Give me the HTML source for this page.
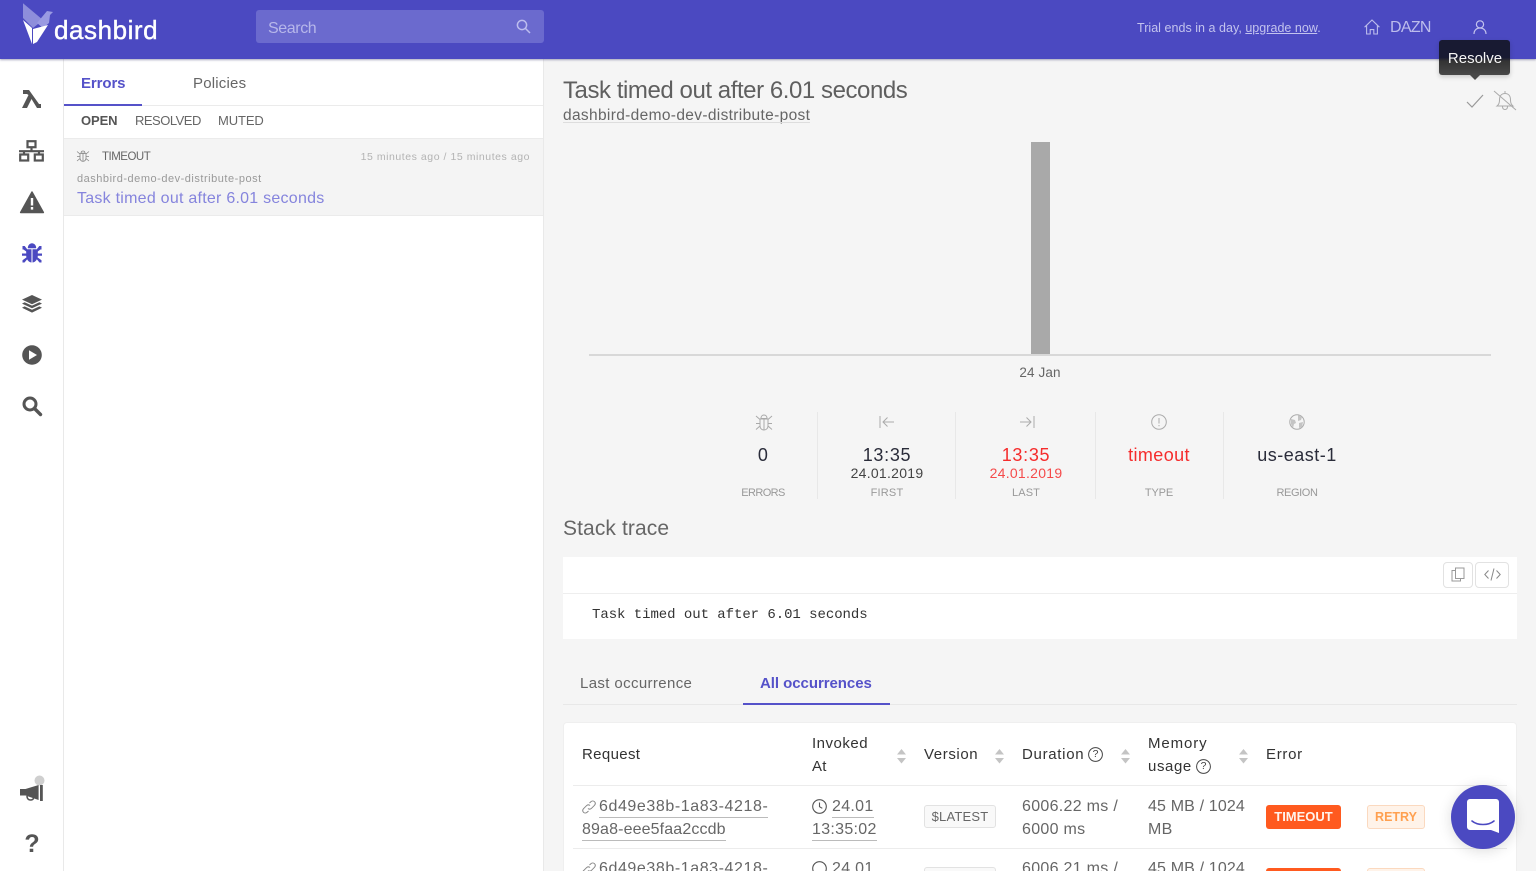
<!DOCTYPE html>
<html lang="en"><head><meta charset="utf-8"><title>Dashbird</title>
<style>
html,body{margin:0;padding:0;width:1536px;height:871px;overflow:hidden;background:#f5f5f5;font-family:"Liberation Sans",sans-serif}
#root{position:relative;width:1536px;height:871px;overflow:hidden}
.a{position:absolute}
.t{position:absolute;white-space:nowrap;line-height:20px;height:20px;margin-top:1px}
.c{text-align:center;transform:translateX(-50%)}
svg{position:absolute;overflow:visible}
.u{border-bottom:1px solid #bbb}
</style></head><body><div id="root">

<!-- left columns -->
<div class="a" style="left:0;top:59px;width:63px;height:812px;background:#fff;border-right:1px solid #e9e9e9"></div>
<div class="a" style="left:64px;top:59px;width:479px;height:812px;background:#fff;border-right:1px solid #e9e9e9"></div>

<!-- header -->
<div class="a" style="left:0;top:0;width:1536px;height:59px;background:#4b49c1;box-shadow:0 1px 2px rgba(60,60,110,.45)"></div>
<svg style="left:22px;top:2px" width="34" height="44" viewBox="0 0 34 44">
<path d="M1 1.300L1 16 11 26 21 18Z" fill="#8e8edb"/><path d="M20 15L25 9 31 10 28 13 27 21 21 26 15 21Z" fill="#9a9ae2"/>
<path d="M1 18L10 26 10 42Z" fill="#fff"/><path d="M11 27L26 23 15 40 11 42Z" fill="#fff"/></svg>
<div class="t" style="left:54px;top:17px;font-size:26px;line-height:24px;height:24px;color:#fff;letter-spacing:.55px;font-weight:400;-webkit-text-stroke:.4px #fff">dashbird</div>
<div class="a" style="left:256px;top:10px;width:288px;height:33px;background:#6b6ace;border-radius:3px"></div>
<div class="t" style="left:268px;top:18px;font-size:16px;color:#b7b7ea;letter-spacing:-.4px">Search</div>
<svg style="left:516px;top:19px" width="15" height="15" viewBox="0 0 15 15" fill="none" stroke="#bdbdee" stroke-width="1.5"><circle cx="6" cy="6" r="4.6"/><path d="M9.5 9.5L14 14"/></svg>
<div class="t" style="left:1137px;top:17px;font-size:12.5px;color:#c3c3ee;letter-spacing:.03px">Trial ends in a day, <span style="text-decoration:underline">upgrade now</span>.</div>
<svg style="left:1364px;top:19px" width="16" height="16" viewBox="0 0 16 16" fill="none" stroke="#bcbcec" stroke-width="1.1"><path d="M.6 8.2L8 1l7.4 7.2M2.6 6.6V15h3.600v-4.400h3.600V15h3.600V6.600"/></svg>
<div class="t" style="left:1390px;top:17px;font-size:16px;color:#bcbcec;letter-spacing:-.7px">DAZN</div>
<svg style="left:1473px;top:20px" width="14" height="15" viewBox="0 0 14 15" fill="none" stroke="#c3c3ee" stroke-width="1.2"><circle cx="7" cy="4.4" r="3.6"/><path d="M1 14c0-3.600 2.400-6 6-6s6 2.400 6 6"/></svg>

<!-- sidebar icons -->
<svg style="left:22px;top:90px" width="19" height="18" viewBox="0 0 19 18"><path d="M1 0h6l10 14h2v4h-4L9.500 9 5 18H0l6.500-13L5 4H1z" fill="#555"/></svg>
<svg style="left:19px;top:140px" width="25" height="22" viewBox="0 0 25 22" fill="none" stroke="#555" stroke-width="2.2"><rect x="8.500" y="1.200" width="8" height="6"/><rect x="1.200" y="14.500" width="8" height="6"/><rect x="15.800" y="14.500" width="8" height="6"/><path d="M0 11.200h25M12.500 7v4M5 11v3M20 11v3"/></svg>
<svg style="left:20px;top:191px" width="24" height="22" viewBox="0 0 24 22"><path d="M12 1L23.400 21.500H.6z" fill="#555" stroke="#555" stroke-linejoin="round" stroke-width="1.400"/><rect x="10.800" y="7" width="2.400" height="7.500" fill="#fff"/><rect x="10.800" y="16" width="2.400" height="2.600" fill="#fff"/></svg>
<svg style="left:22px;top:243px" width="20" height="20" viewBox="0 0 20 20" fill="#4b49c1"><path d="M5.800 5.200C5.800 2 8 .3 10 .3s4.200 1.700 4.200 4.900z"/><path d="M4.200 6.200h5.300V19.500C6.200 19 4.200 16 4.200 12.500zM10.500 6.200h5.300v6.300c0 3.500-2 6.500-5.300 7z"/><path d="M.5 3h2.200L5 6v3L1.500 6.500H.5zM19.500 3h-2.200L15 6v3l3.500-2.500h1zM0 10.500h5v2.300H0zM15 10.500h5v2.300h-5zM5 14v2.500l-2.500 3H.5v-2.200zM15 14v2.500l2.500 3h2v-2.200z"/></svg>
<svg style="left:22px;top:295px" width="20" height="19" viewBox="0 0 20 19" fill="#555"><path d="M10 0l10 4.600-10 4.600L0 4.600z"/><path d="M2.600 7.200L10 10.600l7.400-3.400L20 8.600l-10 4.600L0 8.600z"/><path d="M2.600 11.400L10 14.800l7.400-3.400L20 12.800l-10 4.800L0 12.800z"/></svg>
<svg style="left:22px;top:345px" width="20" height="20" viewBox="0 0 20 20"><circle cx="10" cy="10" r="9.800" fill="#555"/><path d="M7 5.200L15 10l-8 4.800z" fill="#fff"/></svg>
<svg style="left:22px;top:396px" width="20" height="20" viewBox="0 0 20 20" fill="none" stroke="#555"><circle cx="8" cy="8" r="6" stroke-width="3"/><path d="M12.500 12.500L18.500 18.500" stroke-width="3.400" stroke-linecap="round"/></svg>
<svg style="left:20px;top:775px" width="25" height="28" viewBox="0 0 25 28"><circle cx="19.500" cy="5.500" r="5" fill="#cfcfcf"/><path d="M0 14h5.500L18.600 10v15L5.500 20.500H0z" fill="#555"/><rect x="20" y="10" width="2.800" height="16" fill="#555"/><path d="M7 21c0 2.500 1.500 4 3.500 4s3-1 3-2" fill="none" stroke="#555" stroke-width="1.600"/></svg>
<div class="t c" style="left:32px;top:832px;font-size:25px;line-height:22px;height:22px;font-weight:700;color:#555">?</div>

<!-- left list -->
<div class="t" style="left:81px;top:73px;font-size:15px;font-weight:700;color:#5552c9;letter-spacing:-.1px">Errors</div>
<div class="t" style="left:193px;top:73px;font-size:15px;color:#666;letter-spacing:.2px">Policies</div>
<div class="a" style="left:64px;top:105px;width:479px;height:1px;background:#ebebeb"></div>
<div class="a" style="left:64px;top:104px;width:78px;height:2px;background:#5552c9"></div>
<div class="t" style="left:81px;top:110px;font-size:13px;font-weight:700;color:#555;letter-spacing:-.1px">OPEN</div>
<div class="t" style="left:135px;top:110px;font-size:13px;color:#666;letter-spacing:-.5px">RESOLVED</div>
<div class="t" style="left:218px;top:110px;font-size:13px;color:#666;letter-spacing:-.1px">MUTED</div>
<div class="a" style="left:64px;top:138px;width:479px;height:78px;background:#f4f4f4;border-top:1px solid #ebebeb;border-bottom:1px solid #ebebeb;box-sizing:border-box"></div>
<svg style="left:77px;top:150px" width="12" height="12" viewBox="0 0 12 12" fill="none" stroke="#888" stroke-width=".8"><path d="M4 3.200C4 1.500 5 1 6 1s2 .5 2 2.200zM3 3.500h6V8c0 2-1.300 3.400-3 3.400S3 10 3 8zM6 3.500v8M0 1.500L3 4M12 1.500L9 4M0 6.500h3M9 6.500h3M0 11l3-2.500M12 11L9 8.500"/></svg>
<div class="t" style="left:102px;top:146px;font-size:11.500px;color:#666;letter-spacing:-.5px">TIMEOUT</div>
<div class="t" style="right:1006px;top:146px;font-size:10.500px;color:#b3b3b3;letter-spacing:.55px">15 minutes ago / 15 minutes ago</div>
<div class="t" style="left:77px;top:168px;font-size:11px;color:#999;letter-spacing:.52px">dashbird-demo-dev-distribute-post</div>
<div class="t" style="left:77px;top:188px;font-size:16px;color:#8584dd;letter-spacing:.25px">Task timed out after 6.01 seconds</div>

<!-- title -->
<div class="t" style="left:563px;top:77px;font-size:24px;line-height:26px;height:26px;color:#5f5f5f;letter-spacing:-.44px">Task timed out after 6.01 seconds</div>
<div class="t" style="left:563px;top:105px;font-size:15.500px;color:#666;letter-spacing:.34px">dashbird-demo-dev-distribute-post</div>
<div class="a" style="left:563px;top:122px;width:247px;height:1px;background:#ddd"></div>
<svg style="left:1466px;top:94px" width="18" height="14" viewBox="0 0 18 14" fill="none" stroke="#999" stroke-width="1.200"><path d="M1 8l5 5L17 1"/></svg>
<svg style="left:1493px;top:90px" width="24" height="21" viewBox="0 0 24 21" fill="none" stroke="#aaa" stroke-width="1"><path d="M1 1l22 19"/><path d="M4 16c2-1.500 2.500-3.500 2.500-6C6.500 6 8.500 3.500 12 3.500S17.500 6 17.500 10c0 2.500.5 4.500 2.500 6zM12 1v2.500M9.500 16.500c0 2 1 3 2.500 3s2.500-1 2.500-3"/></svg>
<!-- tooltip -->
<div class="a" style="left:1439px;top:40px;width:71px;height:35px;border-radius:3px;background:linear-gradient(#181a32 0,#181a32 50%,#333 60%,#484848 100%);box-shadow:0 2px 5px rgba(0,0,0,.18)"></div>
<div class="a" style="left:1470px;top:75px;width:0;height:0;border-left:5px solid transparent;border-right:5px solid transparent;border-top:5px solid #484848"></div>
<div class="t c" style="left:1475px;top:48px;font-size:15px;color:#f5f5f5">Resolve</div>

<!-- chart -->
<div class="a" style="left:1030.500px;top:142px;width:19.500px;height:213px;background:#a9a9a9"></div>
<div class="a" style="left:589px;top:354px;width:902px;height:2px;background:#d8d8d8"></div>
<div class="t c" style="left:1040px;top:362px;font-size:13.500px;color:#666;letter-spacing:.1px">24 Jan</div>

<!-- stats -->
<svg style="left:756px;top:414px" width="16" height="17" viewBox="0 0 16 17" fill="none" stroke="#aaa" stroke-width="1"><path d="M5 4.500C5 2 6.500 1 8 1s3 1 3 3.500zM4 5h8v7c0 2.500-2 4-4 4s-4-1.500-4-4zM8 5v11M0 2l4 3.500M16 2l-4 3.500M0 9.500h4M12 9.500h4M0 15.500l4-3.500M16 15.500L12 12"/></svg>
<div class="t c" style="left:763px;top:444px;font-size:18px;color:#2a2c3a;letter-spacing:.2px">0</div>
<div class="t c" style="left:763px;top:482px;font-size:11px;color:#999;letter-spacing:-.6px">ERRORS</div>
<div class="a" style="left:817px;top:412px;width:1px;height:87px;background:#e8e8e8"></div>
<svg style="left:879px;top:416px" width="16" height="12" viewBox="0 0 16 12" fill="none" stroke="#aaa" stroke-width="1"><path d="M1 0v12M15 6H4M8.500 1.500L4 6l4.500 4.500"/></svg>
<div class="t c" style="left:887px;top:444px;font-size:18px;color:#2a2c3a;letter-spacing:.7px">13:35</div>
<div class="t c" style="left:887px;top:462px;font-size:14px;color:#444;letter-spacing:.27px">24.01.2019</div>
<div class="t c" style="left:887px;top:482px;font-size:11px;color:#999;letter-spacing:.2px">FIRST</div>
<div class="a" style="left:955px;top:412px;width:1px;height:87px;background:#e8e8e8"></div>
<svg style="left:1019px;top:416px" width="16" height="12" viewBox="0 0 16 12" fill="none" stroke="#aaa" stroke-width="1"><path d="M15 0v12M1 6h11M7.500 1.500L12 6l-4.500 4.500"/></svg>
<div class="t c" style="left:1026px;top:444px;font-size:18px;color:#f52c2c;letter-spacing:.7px">13:35</div>
<div class="t c" style="left:1026px;top:462px;font-size:14px;color:#f54a4a;letter-spacing:.27px">24.01.2019</div>
<div class="t c" style="left:1026px;top:482px;font-size:11px;color:#999;letter-spacing:.1px">LAST</div>
<div class="a" style="left:1095px;top:412px;width:1px;height:87px;background:#e8e8e8"></div>
<svg style="left:1151px;top:414px" width="16" height="16" viewBox="0 0 16 16" fill="none" stroke="#aaa" stroke-width="1"><circle cx="8" cy="8" r="7.300"/><path d="M8 4v5.500M8 11v1.300"/></svg>
<div class="t c" style="left:1159px;top:444px;font-size:18px;color:#f52c2c;letter-spacing:.4px">timeout</div>
<div class="t c" style="left:1159px;top:482px;font-size:11px;color:#999;letter-spacing:-.1px">TYPE</div>
<div class="a" style="left:1223px;top:412px;width:1px;height:87px;background:#e8e8e8"></div>
<svg style="left:1289px;top:414px" width="16" height="16" viewBox="0 0 16 16"><circle cx="8" cy="8" r="7.200" fill="none" stroke="#aaa"/><path d="M2 5l4 1 1 3-2 1-1 4-2-4zM9 1l4 2-1 3-3 1zM10 9l4-1-1 5-3 1z" fill="#c4c4c4"/></svg>
<div class="t c" style="left:1297px;top:444px;font-size:18px;color:#2a2c3a;letter-spacing:.5px">us-east-1</div>
<div class="t c" style="left:1297px;top:482px;font-size:11px;color:#999;letter-spacing:-.4px">REGION</div>

<!-- stack trace -->
<div class="t" style="left:563px;top:517px;font-size:21px;color:#666;line-height:22px;height:22px;letter-spacing:.1px">Stack trace</div>
<div class="a" style="left:563px;top:557px;width:954px;height:82px;background:#fff"></div>
<div class="a" style="left:563px;top:593px;width:954px;height:1px;background:#eee"></div>
<div class="a" style="left:1443px;top:562px;width:28px;height:24px;border:1px solid #e2e2e2;border-radius:4px"></div>
<svg style="left:1451px;top:567px" width="14" height="15" viewBox="0 0 14 15" fill="none" stroke="#999" stroke-width="1"><path d="M4.500 1h8.500v10.500H4.500zM4.500 3.500H1V14h8.500v-2.500"/></svg>
<div class="a" style="left:1475px;top:562px;width:32px;height:24px;border:1px solid #e2e2e2;border-radius:4px"></div>
<svg style="left:1484px;top:568px" width="17" height="13" viewBox="0 0 17 13" fill="none" stroke="#888" stroke-width="1"><path d="M4.500 2.500L.8 6.500l3.700 4M12.500 2.500l3.700 4-3.700 4M10 .5L7 12.500"/></svg>
<div class="t" style="left:592px;top:604px;font-size:14px;font-family:'Liberation Mono',monospace;color:#333;letter-spacing:-.05px">Task timed out after 6.01 seconds</div>

<!-- tabs -->
<div class="t" style="left:580px;top:673px;font-size:15px;color:#666;letter-spacing:.37px">Last occurrence</div>
<div class="t" style="left:760px;top:673px;font-size:15px;font-weight:700;color:#5552c9;letter-spacing:-.05px">All occurrences</div>
<div class="a" style="left:563px;top:704px;width:954px;height:1px;background:#e8e8e8"></div>
<div class="a" style="left:743px;top:703px;width:147px;height:2px;background:#5552c9"></div>

<!-- table -->
<div class="a" style="left:563px;top:722px;width:954px;height:160px;background:#fff;border:1px solid #efefef;border-radius:4px;box-sizing:border-box"></div>
<div class="a" style="left:573px;top:785px;width:934px;height:1px;background:#ececec"></div>
<div class="a" style="left:573px;top:848px;width:934px;height:1px;background:#ececec"></div>

<div class="t" style="left:582px;top:744px;font-size:15px;color:#333;letter-spacing:.35px">Request</div>
<div class="t" style="left:812px;top:733px;font-size:15px;color:#333;letter-spacing:.5px">Invoked</div>
<div class="t" style="left:812px;top:756px;font-size:15px;color:#333;letter-spacing:.2px">At</div>
<div class="t" style="left:924px;top:744px;font-size:15px;color:#333;letter-spacing:.6px">Version</div>
<div class="t" style="left:1022px;top:744px;font-size:15px;color:#333;letter-spacing:.7px">Duration</div>
<div class="t" style="left:1148px;top:733px;font-size:15px;color:#333;letter-spacing:.9px">Memory</div>
<div class="t" style="left:1148px;top:756px;font-size:15px;color:#333;letter-spacing:.6px">usage</div>
<div class="t" style="left:1266px;top:744px;font-size:15px;color:#333;letter-spacing:.7px">Error</div>
<svg style="left:1088px;top:747px" width="15" height="15" viewBox="0 0 15 15" fill="none" stroke="#444"><circle cx="7.500" cy="7.500" r="6.900"/></svg>
<div class="t c" style="left:1095.500px;top:743px;font-size:10.500px;color:#444">?</div>
<svg style="left:1196px;top:759px" width="15" height="15" viewBox="0 0 15 15" fill="none" stroke="#444"><circle cx="7.500" cy="7.500" r="6.900"/></svg>
<div class="t c" style="left:1203.500px;top:755px;font-size:10.500px;color:#444">?</div>
<svg style="left:897px;top:749px" width="9" height="15" viewBox="0 0 9 15" fill="#c4c4c4"><path d="M4.500 0L9 5.500H0zM0 9h9l-4.500 5.500z"/></svg>
<svg style="left:995px;top:749px" width="9" height="15" viewBox="0 0 9 15" fill="#c4c4c4"><path d="M4.500 0L9 5.500H0zM0 9h9l-4.500 5.500z"/></svg>
<svg style="left:1121px;top:749px" width="9" height="15" viewBox="0 0 9 15" fill="#c4c4c4"><path d="M4.500 0L9 5.500H0zM0 9h9l-4.500 5.500z"/></svg>
<svg style="left:1239px;top:749px" width="9" height="15" viewBox="0 0 9 15" fill="#c4c4c4"><path d="M4.500 0L9 5.500H0zM0 9h9l-4.500 5.500z"/></svg>

<!-- row 1 -->
<svg style="left:582px;top:800px" width="14" height="14" viewBox="0 0 14 14" fill="none" stroke="#888" stroke-width="1"><path d="M6 8.500c1.200 1 2.500.8 3.500-.2l3-3c1-1.200 1-2.600 0-3.600s-2.500-1-3.600 0L7.500 3M8 5.500c-1.200-1-2.500-.8-3.500.2l-3 3c-1 1.200-1 2.600 0 3.600s2.500 1 3.600 0L6.500 11"/></svg>
<div class="t u" style="left:599px;top:796px;font-size:16px;color:#666;letter-spacing:.58px">6d49e38b-1a83-4218-</div>
<div class="t u" style="left:582px;top:819px;font-size:16px;color:#666;letter-spacing:.13px">89a8-eee5faa2ccdb</div>
<svg style="left:812px;top:799px" width="15" height="15" viewBox="0 0 15 15" fill="none" stroke="#555" stroke-width="1.100"><circle cx="7.500" cy="7.500" r="6.800"/><path d="M7.500 3.500v4.200l2.800 1.600"/></svg>
<div class="t u" style="left:832px;top:796px;font-size:16px;color:#666;letter-spacing:.3px">24.01</div>
<div class="t u" style="left:812px;top:819px;font-size:16px;color:#666;letter-spacing:.3px">13:35:02</div>
<div class="a" style="left:924px;top:805px;width:72px;height:23px;box-sizing:border-box;border:1px solid #e2e2e2;background:#f9f9f9;border-radius:3px;text-align:center;font-size:13px;line-height:21px;color:#666;letter-spacing:.2px">$LATEST</div>
<div class="t" style="left:1022px;top:796px;font-size:16px;color:#666;letter-spacing:.3px">6006.22 ms /</div>
<div class="t" style="left:1022px;top:819px;font-size:16px;color:#666;letter-spacing:.3px">6000 ms</div>
<div class="t" style="left:1148px;top:796px;font-size:16px;color:#666;letter-spacing:.15px">45 MB / 1024</div>
<div class="t" style="left:1148px;top:819px;font-size:16px;color:#666;letter-spacing:.3px">MB</div>
<div class="a" style="left:1266px;top:805px;width:75px;height:24px;background:#ff5a1f;border-radius:3px;text-align:center;font-size:13px;line-height:24px;font-weight:700;color:#fff3ec">TIMEOUT</div>
<div class="a" style="left:1367px;top:805px;width:58px;height:24px;box-sizing:border-box;border:1px solid #fbd9bf;background:#fff3e9;border-radius:3px;text-align:center;font-size:12.500px;line-height:22px;font-weight:700;color:#ffa050">RETRY</div>

<!-- row 2 (clipped) -->
<svg style="left:582px;top:862px" width="14" height="14" viewBox="0 0 14 14" fill="none" stroke="#888" stroke-width="1"><path d="M6 8.500c1.200 1 2.500.8 3.500-.2l3-3c1-1.200 1-2.600 0-3.600s-2.500-1-3.600 0L7.500 3M8 5.500c-1.200-1-2.500-.8-3.500.2l-3 3c-1 1.200-1 2.600 0 3.600s2.500 1 3.600 0L6.500 11"/></svg>
<div class="t" style="left:599px;top:858px;font-size:16px;color:#666;letter-spacing:.58px">6d49e38b-1a83-4218-</div>
<svg style="left:812px;top:861px" width="15" height="15" viewBox="0 0 15 15" fill="none" stroke="#555" stroke-width="1.100"><circle cx="7.500" cy="7.500" r="6.800"/></svg>
<div class="t" style="left:832px;top:858px;font-size:16px;color:#666;letter-spacing:.3px">24.01</div>
<div class="a" style="left:924px;top:867px;width:72px;height:23px;box-sizing:border-box;border:1px solid #e2e2e2;background:#f9f9f9;border-radius:3px"></div>
<div class="t" style="left:1022px;top:858px;font-size:16px;color:#666;letter-spacing:.3px">6006.21 ms /</div>
<div class="t" style="left:1148px;top:858px;font-size:16px;color:#666;letter-spacing:.15px">45 MB / 1024</div>
<div class="a" style="left:1266px;top:868px;width:75px;height:24px;background:#ff5a1f;border-radius:3px"></div>
<div class="a" style="left:1367px;top:868px;width:58px;height:24px;box-sizing:border-box;border:1px solid #fbd9bf;background:#fff3e9;border-radius:3px"></div>

<!-- chat -->
<div class="a" style="left:1451px;top:785px;width:64px;height:64px;border-radius:50%;background:#4b49c1;box-shadow:0 2px 14px rgba(0,0,0,.14)"></div>
<svg style="left:1467px;top:799px" width="32" height="35" viewBox="0 0 32 35"><path d="M3 0h26a3 3 0 0 1 3 3v31l-8-3H3a3 3 0 0 1-3-3V3a3 3 0 0 1 3-3z" fill="#fff"/><path d="M5 22c3 2.500 7 3.500 11 3.500s8-1 11-3.500" fill="none" stroke="#4b49c1" stroke-width="1.600" stroke-linecap="round"/></svg>

</div></body></html>
